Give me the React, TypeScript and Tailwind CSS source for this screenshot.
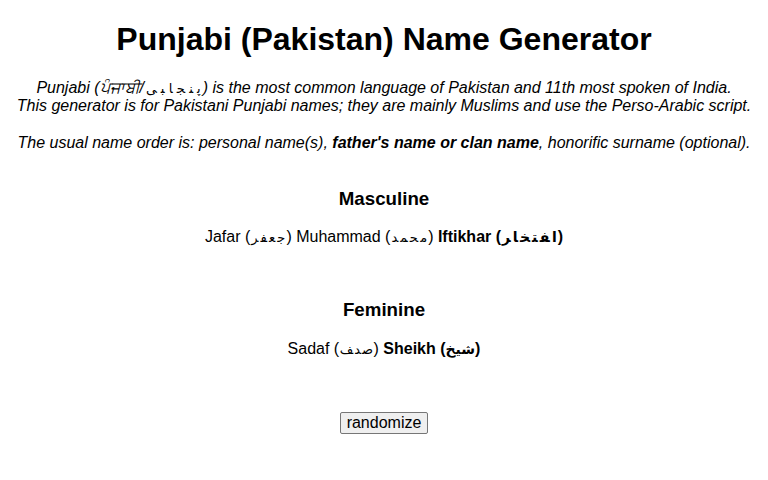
// Arabic shown as separated joining forms, like the reference rendering
function Ar({ word, bold = false, wide = false, tight = false }: { word: string; bold?: boolean; wide?: boolean; tight?: boolean }) {
  const letters = Array.from(word);
  const gap = wide ? "mx-[2px]" : tight ? "mx-[0.5px]" : "mx-[1px]";
  return (
    <span
      className={
        bold
          ? "font-['DejaVu_Sans',sans-serif] text-[14px] leading-none not-italic"
          : "font-['DejaVu_Sans',sans-serif] text-[13px] font-normal leading-none not-italic"
      }
    >
      {letters.map((c, i) => (
        <span key={i} className={gap}>
          {(i > 0 ? "\u200D" : "") + c + (i < letters.length - 1 ? "\u200D" : "")}
        </span>
      ))}
    </span>
  );
}

export default function App() {
  return (
    <div className="min-h-screen bg-white px-2 pt-[21px] text-center font-['Liberation_Sans',sans-serif] text-[16px] leading-[18.4px] text-black">
      {/* header */}
      <h1 className="mb-[21px] text-[32px] font-bold leading-[37px]">
        Punjabi (Pakistan) Name Generator
      </h1>
      <p className="italic">
        Punjabi (ਪੰਜਾਬੀ/<Ar word="پنجابی" wide />) is the most common language of Pakistan and 11th most spoken of India.
        <br />
        This generator is for Pakistani Punjabi names; they are mainly Muslims and use the Perso-Arabic script.
      </p>
      <p className="mt-[18px] italic">
        The usual name order is: personal name(s), <b>father's name or clan name</b>, honorific surname (optional).
      </p>

      {/* masculine */}
      <h3 className="mt-[36px] text-[18.72px] font-bold leading-[21.5px]">Masculine</h3>
      <p className="mt-[18.72px]">
        Jafar (<Ar word="جعفر" />) Muhammad (<Ar word="محمد" />){" "}
        <b>
          Iftikhar (<Ar word="افتخار" bold />)
        </b>
      </p>

      {/* feminine */}
      <h3 className="mt-[52.5px] text-[18.72px] font-bold leading-[21.5px]">Feminine</h3>
      <p className="mt-[18.72px]">
        Sadaf (<Ar word="صدف" tight />){" "}
        <b>
          Sheikh (<span className="font-['DejaVu_Sans',sans-serif] text-[14px] leading-none">شیخ</span>)
        </b>
      </p>

      <div className="mt-[53.8px]">
        <button className="rounded-[2px] border border-[#767676] bg-[#efefef] px-[6px] py-[1px] text-[16px] leading-[18.4px] text-black">
          randomize
        </button>
      </div>
    </div>
  );
}
